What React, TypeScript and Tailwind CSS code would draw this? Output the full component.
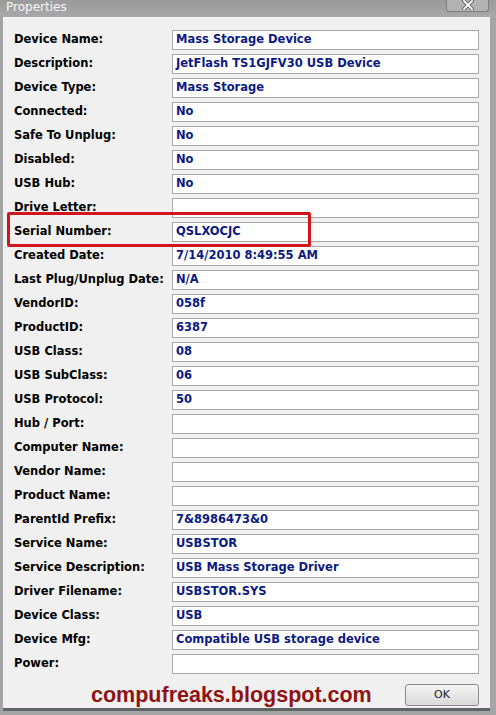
import { Fragment } from 'react';

const rows: [string, string][] = [
  ['Device Name:', 'Mass Storage Device'],
  ['Description:', 'JetFlash TS1GJFV30 USB Device'],
  ['Device Type:', 'Mass Storage'],
  ['Connected:', 'No'],
  ['Safe To Unplug:', 'No'],
  ['Disabled:', 'No'],
  ['USB Hub:', 'No'],
  ['Drive Letter:', ''],
  ['Serial Number:', 'QSLXOCJC'],
  ['Created Date:', '7/14/2010 8:49:55 AM'],
  ['Last Plug/Unplug Date:', 'N/A'],
  ['VendorID:', '058f'],
  ['ProductID:', '6387'],
  ['USB Class:', '08'],
  ['USB SubClass:', '06'],
  ['USB Protocol:', '50'],
  ['Hub / Port:', ''],
  ['Computer Name:', ''],
  ['Vendor Name:', ''],
  ['Product Name:', ''],
  ['ParentId Prefix:', '7&8986473&0'],
  ['Service Name:', 'USBSTOR'],
  ['Service Description:', 'USB Mass Storage Driver'],
  ['Driver Filename:', 'USBSTOR.SYS'],
  ['Device Class:', 'USB'],
  ['Device Mfg:', 'Compatible USB storage device'],
  ['Power:', ''],
];

const font = { fontFamily: '"DejaVu Sans", Verdana, sans-serif' };

export default function App() {
  return (
    <div className="relative h-[715px] w-[496px] overflow-hidden bg-[#a4a4a4]" style={font}>
      {/* title bar */}
      <div className="flex h-[17px] items-start justify-between bg-gradient-to-b from-[#9a9a9a] to-[#a8a8a8] pl-[6px] pr-[7px]">
        <span className="text-[12px] leading-[14px] text-white/90">Properties</span>
        <div className="flex h-[12px] w-[43px] items-start justify-center rounded-b-[3px] border border-t-0 border-[#7d7d7d] bg-[#b2b2b2]">
          <svg width="12" height="10" viewBox="0 0 12 10">
            <path d="M2 1 L10 9 M10 1 L2 9" stroke="#555" strokeWidth="3.4" strokeLinecap="square" />
            <path d="M2 1 L10 9 M10 1 L2 9" stroke="#fff" strokeWidth="1.8" strokeLinecap="square" />
          </svg>
        </div>
      </div>

      {/* body */}
      <div className="ml-[3px] mr-[6px] h-[694px] border-b-[3px] border-[#5f6466] bg-[#f0f0f0]">
        <div className="relative grid grid-cols-[158px_307px] gap-y-[4px] pt-[13px] pl-[11px]">
          {rows.map(([label, value]) => (
            <Fragment key={label}>
              <div className="flex h-[20px] items-center text-[11.5px] font-bold text-black">{label}</div>
              <div className="flex h-[20px] items-center border border-[#a9a9a9] bg-white pl-[3px] text-[11.5px] font-bold text-[#0b1a82]">
                {value}
              </div>
            </Fragment>
          ))}
          {/* highlight around serial number */}
          <div className="absolute left-[4px] top-[195px] h-[35px] w-[304px] rounded-[2px] border-[3px] border-[#d0161c]" />
        </div>

        <div className="mt-[9px] flex items-center">
          <div
            className="ml-[88px] w-[290px] text-[21.5px] font-bold leading-[24px] text-[#8e1414]"
            style={{ fontFamily: '"Liberation Sans", Arial, sans-serif' }}
          >
            compufreaks.blogspot.com
          </div>
          <button className="ml-[24px] h-[22px] w-[74px] rounded-[3px] border border-[#8a8a8a] bg-gradient-to-b from-[#f4f4f4] to-[#d9d9d9] text-[11px] text-[#222]">
            OK
          </button>
        </div>
      </div>
    </div>
  );
}
